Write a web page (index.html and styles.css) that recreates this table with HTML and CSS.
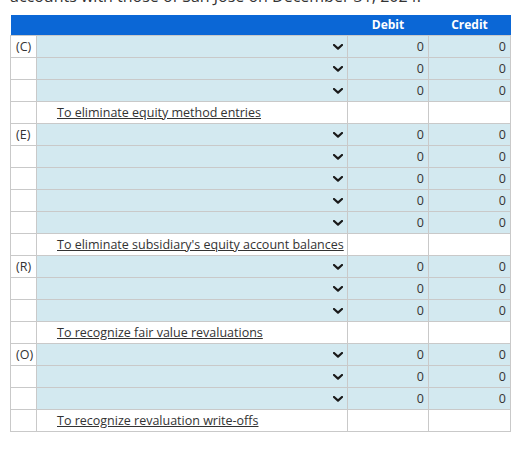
FILE: index.html
```html
<!DOCTYPE html>
<html lang="en">
<head>
  <meta charset="UTF-8" />
  <title>Consolidation Worksheet Entries</title>
  <link rel="stylesheet" href="styles.css">
</head>
<body>
  <div class="page">
    <p class="lead">accounts with those of San Jose on December 31, 2024.</p>

    <table class="entries">
      <colgroup>
        <col class="c-key">
        <col class="c-acct">
        <col class="c-amt">
        <col class="c-amt2">
      </colgroup>
      <thead>
        <tr>
          <th></th>
          <th></th>
          <th>Debit</th>
          <th>Credit</th>
        </tr>
      </thead>
      <tbody>
        <tr class="line"><td class="key">(C)</td><td class="acct"><div class="select"><svg viewBox="0 0 10 6"><path d="M1 1l4 3.6L9 1"/></svg></div></td><td class="amt">0</td><td class="amt">0</td></tr>
        <tr class="line"><td class="key"></td><td class="acct"><div class="select"><svg viewBox="0 0 10 6"><path d="M1 1l4 3.6L9 1"/></svg></div></td><td class="amt">0</td><td class="amt">0</td></tr>
        <tr class="line"><td class="key"></td><td class="acct"><div class="select"><svg viewBox="0 0 10 6"><path d="M1 1l4 3.6L9 1"/></svg></div></td><td class="amt">0</td><td class="amt">0</td></tr>
        <tr class="memo"><td></td><td><span>To eliminate equity method entries</span></td><td></td><td></td></tr>

        <tr class="line"><td class="key">(E)</td><td class="acct"><div class="select"><svg viewBox="0 0 10 6"><path d="M1 1l4 3.6L9 1"/></svg></div></td><td class="amt">0</td><td class="amt">0</td></tr>
        <tr class="line"><td class="key"></td><td class="acct"><div class="select"><svg viewBox="0 0 10 6"><path d="M1 1l4 3.6L9 1"/></svg></div></td><td class="amt">0</td><td class="amt">0</td></tr>
        <tr class="line"><td class="key"></td><td class="acct"><div class="select"><svg viewBox="0 0 10 6"><path d="M1 1l4 3.6L9 1"/></svg></div></td><td class="amt">0</td><td class="amt">0</td></tr>
        <tr class="line"><td class="key"></td><td class="acct"><div class="select"><svg viewBox="0 0 10 6"><path d="M1 1l4 3.6L9 1"/></svg></div></td><td class="amt">0</td><td class="amt">0</td></tr>
        <tr class="line"><td class="key"></td><td class="acct"><div class="select"><svg viewBox="0 0 10 6"><path d="M1 1l4 3.6L9 1"/></svg></div></td><td class="amt">0</td><td class="amt">0</td></tr>
        <tr class="memo"><td></td><td><span>To eliminate subsidiary's equity account balances</span></td><td></td><td></td></tr>

        <tr class="line"><td class="key">(R)</td><td class="acct"><div class="select"><svg viewBox="0 0 10 6"><path d="M1 1l4 3.6L9 1"/></svg></div></td><td class="amt">0</td><td class="amt">0</td></tr>
        <tr class="line"><td class="key"></td><td class="acct"><div class="select"><svg viewBox="0 0 10 6"><path d="M1 1l4 3.6L9 1"/></svg></div></td><td class="amt">0</td><td class="amt">0</td></tr>
        <tr class="line"><td class="key"></td><td class="acct"><div class="select"><svg viewBox="0 0 10 6"><path d="M1 1l4 3.6L9 1"/></svg></div></td><td class="amt">0</td><td class="amt">0</td></tr>
        <tr class="memo"><td></td><td><span>To recognize fair value revaluations</span></td><td></td><td></td></tr>

        <tr class="line"><td class="key">(O)</td><td class="acct"><div class="select"><svg viewBox="0 0 10 6"><path d="M1 1l4 3.6L9 1"/></svg></div></td><td class="amt">0</td><td class="amt">0</td></tr>
        <tr class="line"><td class="key"></td><td class="acct"><div class="select"><svg viewBox="0 0 10 6"><path d="M1 1l4 3.6L9 1"/></svg></div></td><td class="amt">0</td><td class="amt">0</td></tr>
        <tr class="line"><td class="key"></td><td class="acct"><div class="select"><svg viewBox="0 0 10 6"><path d="M1 1l4 3.6L9 1"/></svg></div></td><td class="amt">0</td><td class="amt">0</td></tr>
        <tr class="memo"><td></td><td><span>To recognize revaluation write-offs</span></td><td></td><td></td></tr>
      </tbody>
    </table>
  </div>
</body>
</html>
```

FILE: styles.css
```css
*, *::before, *::after {
  box-sizing: border-box;
}

:root {
  --text: #333;
  --head-bg: #0b67d6;
  --cell-bg: #d3e9f0;
  --line: #c9c9c9;
}

body {
  margin: 0;
  font-family: 'Open Sans', sans-serif;
  color: var(--text);
  background: #fff;
  overflow: hidden;
}

.page {
  padding: 0 10px;
}

.lead {
  margin: -16px 0 7px;
  font-size: 16px;
  line-height: 24px;
  white-space: nowrap;
}

.entries {
  width: 500px;
  border-collapse: collapse;
  table-layout: fixed;
  font-size: 12.5px;
}

.c-key { width: 26px; }
.c-acct { width: 311px; }
.c-amt { width: 81px; }
.c-amt2 { width: 82px; }

.entries thead th {
  height: 20px;
  padding: 0;
  background: var(--head-bg);
  color: #fff;
  font-size: 12px;
  font-weight: 700;
  text-align: center;
  line-height: 20px;
}

.entries td {
  height: 22px;
  padding: 0;
  border: 1px solid var(--line);
  line-height: 20px;
  white-space: nowrap;
}

.entries td.key {
  padding-left: 5px;
  background: #fff;
}

.line td.acct,
.line td.amt {
  background: var(--cell-bg);
}

.entries td.amt {
  text-align: right;
  padding-right: 4px;
}

.select {
  display: flex;
  justify-content: flex-end;
  align-items: center;
  height: 20px;
  padding-right: 4px;
}

.select svg {
  width: 10px;
  height: 6px;
  fill: none;
  stroke: #1a1a1a;
  stroke-width: 2.2;
  stroke-linecap: round;
  stroke-linejoin: round;
}

.memo td span {
  display: inline-block;
  padding-left: 20px;
  text-decoration: underline;
}
```
